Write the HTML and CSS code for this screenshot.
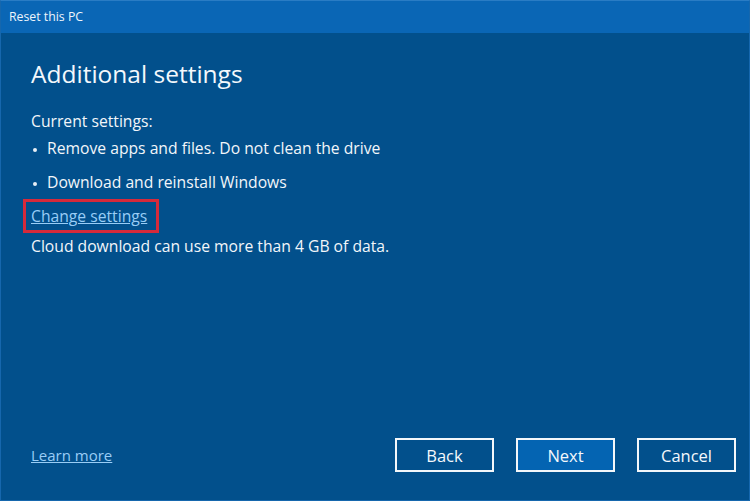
FILE: index.html
```html
<!DOCTYPE html>
<html lang="en">
<head>
<meta charset="utf-8">
<title>Reset this PC</title>
<link rel="stylesheet" href="styles.css">
</head>
<body>
<div class="window">
  <div class="titlebar">Reset this PC</div>
  <div class="content">
    <h1 class="heading">Additional settings</h1>
    <p class="row row-current">Current settings:</p>
    <ul class="list">
      <li class="item">Remove apps and files. Do not clean the drive</li>
      <li class="item item-second">Download and reinstall Windows</li>
    </ul>
    <div class="highlight"><a class="link" href="#">Change settings</a></div>
    <p class="row row-note">Cloud download can use more than 4 GB of data.</p>
    <div class="footer">
      <a class="link learn" href="#">Learn more</a>
      <div class="buttons">
        <button class="btn">Back</button>
        <button class="btn btn-primary">Next</button>
        <button class="btn">Cancel</button>
      </div>
    </div>
  </div>
</div>
</body>
</html>
```

FILE: styles.css
```css
* { box-sizing: border-box; }
html, body { margin: 0; padding: 0; }
body {
  width: 750px;
  height: 501px;
  background: #02508c;
  font-family: "Open Sans", "Noto Sans", sans-serif;
  color: #f2f6fa;
}
.window {
  width: 750px;
  height: 501px;
  display: flex;
  flex-direction: column;
  border: 1px solid #1667ad;
  border-top-color: #2a7cc4;
  background: #02508c;
}
.titlebar {
  height: 32px;
  flex: none;
  background: #0a66b5;
  padding-left: 8px;
  font-size: 12.3px;
  line-height: 32px;
  color: #eef5fc;
}
.content {
  flex: 1;
  display: flex;
  flex-direction: column;
  padding: 0 13px 28px 30px;
}
.heading {
  margin: 24px 0 0;
  font-size: 24.5px;
  font-weight: 400;
  line-height: 34px;
  height: 34px;
  color: #f4f8fc;
}
.row {
  margin: 0;
  font-size: 15.7px;
  line-height: 24px;
  height: 24px;
}
.row-current { margin-top: 18px; }
.row-note { margin-top: 1px; }
.list {
  list-style: none;
  margin: 3px 0 0;
  padding: 0;
}
.item {
  position: relative;
  padding-left: 16px;
  font-size: 15.7px;
  line-height: 24px;
  height: 24px;
}
.item::before {
  content: "";
  position: absolute;
  left: 2px;
  top: 12px;
  width: 4px;
  height: 4px;
  border-radius: 50%;
  background: #e8eff6;
}
.item-second { margin-top: 10px; }
.highlight {
  align-self: flex-start;
  margin: 5px 0 0 -8px;
  border: 3px solid #d62a3b;
  padding: 2px 9px 2px 5px;
  height: 34px;
  line-height: 24px;
}
.link {
  color: #99cdf6;
  text-decoration: underline;
  font-size: 15.7px;
}
.footer {
  margin-top: auto;
  display: flex;
  align-items: center;
  justify-content: space-between;
}
.learn { font-size: 15px; }
.buttons {
  display: flex;
  gap: 22px;
}
.btn {
  width: 99px;
  height: 34px;
  border: 2px solid #f4f7fa;
  background: transparent;
  color: #f4f8fc;
  font-family: "Open Sans", "Noto Sans", sans-serif;
  font-size: 16.5px;
  padding: 0;
}
.btn-primary { background: #0464b2; }
```
